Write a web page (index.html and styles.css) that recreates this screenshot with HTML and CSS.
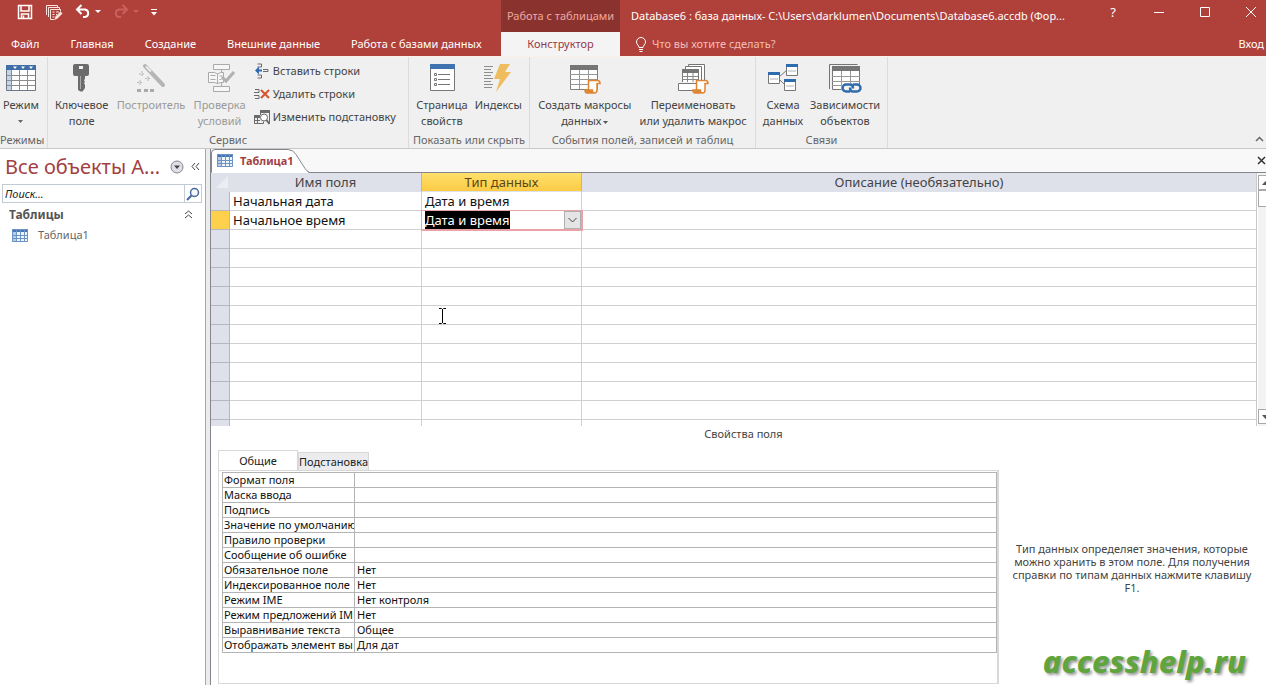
FILE: index.html
```html
<!DOCTYPE html>
<html lang="ru">
	<head>
		<meta charset="utf-8">
		<title>Database6 : база данных</title>
		<link rel="stylesheet" href="styles.css">
	</head>
	<body>
		<header id="pageHeader">
			<div class="headerLeft">
				<div class="quickAccess">
					<button aria-label="Сохранить"><svg width="16" height="16" viewBox="0 0 16 16"><path d="M1.500 1.500h13v13h-13zM4 2v5h8V2M4.500 14v-4h7v4M6.500 14v-2.500" fill="none" stroke="#fff" stroke-width="1.500"/></svg></button>
					<button aria-label="Форма"><svg width="18" height="17" viewBox="0 0 18 17"><path d="M3.500 13V3.500M1.500 11V1.500h11v2M3.500 3.500h11v2M5.500 15.500v-10h10v2M5.500 15.500h4M7.500 8h2M11 8h3M7.500 10.500h2M11 10.500h1M7.500 13h2" fill="none" stroke="#fbe3e0"/><path d="M9.500 16l1-3.500 5-5 2 2-5 5z" fill="#fbe3e0"/></svg></button>
					<button aria-label="Отменить"><svg width="26" height="16" viewBox="0 0 26 16"><path d="M2 5.500h8a3.800 3.800 0 0 1 0 7.500H8M6.500 1L2 5.500 6.500 10" fill="none" stroke="#fff" stroke-width="2"/><path d="M20 6h6l-3 3z" fill="#fff"/></svg></button>
					<button aria-label="Вернуть" disabled><svg width="26" height="16" viewBox="0 0 26 16"><path d="M14 5.500H6a3.800 3.800 0 0 0 0 7.500h2M9.500 1L14 5.500 9.500 10" fill="none" stroke="#c9605b" stroke-width="2"/><path d="M20 6h6l-3 3z" fill="#c9605b"/></svg></button>
					<button aria-label="Настройка панели"><svg width="6" height="8" viewBox="0 0 6 8"><path d="M0 1.500h6" stroke="#fff"/><path d="M0 4h6L3 7.500z" fill="#fff"/></svg></button>
				</div>
				<nav>
					<a href="#file">Файл</a>
					<a href="#home">Главная</a>
					<a href="#create">Создание</a>
					<a href="#external">Внешние данные</a>
					<a href="#tools">Работа с базами данных</a>
				</nav>
			</div>
			<div class="headerContext">
				<span>Работа с таблицами</span>
				<a href="#design">Конструктор</a>
			</div>
			<div class="headerRight">
				<div class="titleRow">
					<h1>Database6 : база данных- C:\Users\darklumen\Documents\Database6.accdb (Фор...</h1>
					<div class="windowButtons">
						<button class="help" aria-label="Справка">?</button>
						<button aria-label="Свернуть"><svg width="12" height="12"><path d="M1 6.500h10" stroke="#fff"/></svg></button>
						<button aria-label="Развернуть"><svg width="12" height="12"><path d="M1.500 1.500h9v9h-9z" stroke="#fff" fill="none"/></svg></button>
						<button aria-label="Закрыть"><svg width="12" height="12"><path d="M1 1l10 10M11 1L1 11" stroke="#fff"/></svg></button>
					</div>
				</div>
				<div class="tellRow">
					<a href="#tell"><svg width="12" height="15" viewBox="0 0 12 15"><path d="M4 10.500C4 8.500 1.500 7.500 1.500 5a4.500 4.500 0 0 1 9 0c0 2.500-2.500 3.500-2.500 5.500zM4 12.500h4M4.500 14.500h3" fill="none" stroke="#fff"/></svg>Что вы хотите сделать?</a>
					<a href="#login" class="login">Вход</a>
				</div>
			</div>
		</header>

		<section id="ribbon">
			<div class="group groupViews">
				<div class="tools">
					<button class="big">
						<svg width="32" height="32" viewBox="0 0 32 32"><path d="M1 2h30v26H1z" fill="#fff"/><path d="M1 7h5v21H1z" fill="#c5d5e8"/><path d="M1 12.500h30M1 17.500h30M1 22.500h30M6.500 7v21M14.500 7v21M22.500 7v21" stroke="#8c8c8c"/><path d="M1.500 2.500h29v25h-29z" fill="none" stroke="#6e7885"/><path d="M1 2h30v5H1z" fill="#3f6ea8"/><path d="M8 3.500h4l-2 2.500zM16 3.500h4l-2 2.500zM24 3.500h4l-2 2.500z" fill="#fff"/></svg>
						<span>Режим</span>
						<svg class="caret" width="5" height="3"><path d="M0 0h5L2.500 3z" fill="#666"/></svg>
					</button>
				</div>
				<h2>Режимы</h2>
			</div>
			<div class="group groupTools">
				<div class="tools">
					<button class="big">
						<svg width="32" height="32" viewBox="0 0 32 32"><path fill-rule="evenodd" d="M9 1h12q2 0 2 2v8q0 2-2 2h-2v3l-1 1 1 2-1 1 1 2v3l-2.500 3.500h-2L12 27V13H9q-2 0-2-2V3q0-2 2-2zM13 3v3h4V3z" fill="#6b6b6b"/><path d="M14.500 13v13" stroke="#aaa"/></svg>
						<span>Ключевое<br>поле</span>
					</button>
					<button class="big" disabled>
						<svg width="32" height="32" viewBox="0 0 32 32"><path d="M10 3l18 19" stroke="#b5b5b5" stroke-width="4" stroke-linecap="round"/><path d="M11 3.500l5 5" stroke="#efefef" stroke-width="2"/><path d="M7 8v6M4 11h6M13 13v5M10 15.500h6M5 17v5M2 19.500h6" stroke="#b5b5b5" stroke-dasharray="2 1"/><path d="M2 26h4v3H2zM9 26h4v3H9zM15 26h4v3h-4z" fill="#aaa"/></svg>
						<span>Построитель</span>
					</button>
					<button class="big" disabled>
						<svg width="32" height="32" viewBox="0 0 32 32"><path d="M9.500 1.500h16v5h-16zM9.500 23.500h16v5h-16zM17.500 7v3M17.500 20v3" fill="#f6f6f6" stroke="#aaa"/><path d="M4.500 9.500h6l3 1.500v9.500l-3-1h-6zM13.500 11l3-1.500h3v10h-3l-3 1zM6.500 12.500h5M6.500 16.500h5M15.500 13h3M15.500 16.500h2" fill="#f6f6f6" stroke="#aaa"/><path d="M18 14l4 4 8-9" fill="none" stroke="#b0b0b0" stroke-width="3"/></svg>
						<span>Проверка<br>условий</span>
					</button>
					<div class="smallTools">
						<button><svg width="16" height="16" viewBox="0 0 16 16"><path d="M3.500 1h4v3h-4M3.500 12h4v3h-4M9 6.500h5v2H9" fill="none" stroke="#6b6b6b"/><path d="M8 7.500H3" stroke="#2e6cad" stroke-width="2"/><path d="M5 3.500v8L1 7.500z" fill="#2e6cad"/></svg>Вставить строки</button>
						<button><svg width="16" height="16" viewBox="0 0 16 16"><path d="M1 3.500h4v3H0M1 12.500h4v-3H0" fill="none" stroke="#6b6b6b"/><path d="M7 4l8 8M15 4l-8 8" stroke="#d8522c" stroke-width="2"/></svg>Удалить строки</button>
						<button><svg width="16" height="16" viewBox="0 0 16 16"><path d="M6.500 6V1.500h9v12H14M.500 8.500h6M.500 6.500v8h9v-2M3.500 8v6M0 11.500h6" fill="none" stroke="#6b6b6b"/><path d="M6 1h10v3H6zM0 6h6v2H0z" fill="#6b6b6b"/><circle cx="10" cy="8.500" r="3.500" fill="#fff" stroke="#6b6b6b"/><path d="M12.500 11l3 4" stroke="#6b6b6b" stroke-width="2"/></svg>Изменить подстановку</button>
					</div>
				</div>
				<h2>Сервис</h2>
			</div>
			<div class="group groupShow">
				<div class="tools">
					<button class="big">
						<svg width="32" height="32" viewBox="0 0 32 32"><path d="M4.500 1.500h24v26h-24z" fill="#fff" stroke="#777"/><path d="M4 1h25v5H4z" fill="#3f74b0"/><path d="M12 11.500h12M12 16.500h12M12 21.500h12" stroke="#777"/><path d="M8.500 10.500h2v2h-2zM8.500 15.500h2v2h-2zM8.500 20.500h2v2h-2z" fill="none" stroke="#777"/></svg>
						<span>Страница<br>свойств</span>
					</button>
					<button class="big">
						<svg width="32" height="32" viewBox="0 0 32 32"><path d="M2 3.500h9M2 6.500h7M2 9.500h9M2 12.500h7M2 15.500h9M2 18.500h7M2 21.500h9M2 24.500h8" stroke="#8d8d8d"/><path d="M18 1h10l-5 8h6L14 29l4-13h-6z" fill="#efbd5e"/></svg>
						<span>Индексы</span>
					</button>
				</div>
				<h2>Показать или скрыть</h2>
			</div>
			<div class="group groupEvents">
				<div class="tools">
					<button class="big">
						<svg width="32" height="32" viewBox="0 0 32 32"><path d="M1.500 2.500h27v24h-27z" fill="#fff" stroke="#808080"/><path d="M1 11.500h27M1 16.500h27M1 21.500h27M10.500 6v20M19.500 6v20" stroke="#999"/><path d="M1 2h28v5H1z" fill="#757575"/><path d="M19.500 27V17.500h9q2.500 0 2.500 3h-3V27q0 3-2.500 3H18q-2 0-2-3h8" fill="#fff" stroke="#df8432" stroke-width="1.500"/><path d="M16 27h8l1 3h-7z" fill="#df8432"/></svg>
						<span>Создать макросы<br>данных<svg class="caret" width="5" height="3"><path d="M0 0h5L2.500 3z" fill="#555"/></svg></span>
					</button>
					<button class="big">
						<svg width="32" height="32" viewBox="0 0 32 32"><path d="M11.500 4V1.500h16v18M8.500 7V3.500h16v16M5.500 19V6.500h16v13" fill="#fff" stroke="#757575"/><path d="M5 6h17v4H5z" fill="#757575"/><path d="M5 13.500h16M5 16.500h16M10.500 10v9M16 10v9" stroke="#888"/><path d="M1.500 20.500h18v7h-18z" fill="#fff" stroke="#777"/><path d="M19.500 27V17.500h9q2.500 0 2.500 3h-3V27q0 3-2.500 3H18q-2 0-2-3h8" fill="#fff" stroke="#df8432" stroke-width="1.500"/><path d="M16 27h8l1 3h-7z" fill="#df8432"/></svg>
						<span>Переименовать<br>или удалить макрос</span>
					</button>
				</div>
				<h2>События полей, записей и таблиц</h2>
			</div>
			<div class="group groupLinks">
				<div class="tools">
					<button class="big">
						<svg width="32" height="32" viewBox="0 0 32 32"><path d="M12 14l8-7M12 16l5 5" stroke="#777"/><path d="M1.500 9.500h11v11h-11zM19.500 1.500h11v11h-11zM17.500 16.500h11v11h-11z" fill="#fff" stroke="#777"/><path d="M1 9h12v3H1zM19 1h12v3H19zM17 16h12v3H17z" fill="#2f6cae"/><path d="M3 16h8M21 8h8M19 23h8" stroke="#b0b0b0"/></svg>
						<span>Схема<br>данных</span>
					</button>
					<button class="big">
						<svg width="34" height="32" viewBox="0 0 34 32"><path d="M1.500 26V1.500h28" fill="none" stroke="#757575"/><path d="M4.500 3.500h27v23h-27z" fill="#fff" stroke="#757575"/><path d="M4 3h28v5H4z" fill="#757575"/><path d="M4 13.500h28M4 18.500h28M4 22.500h28M13.500 8v18M22.500 8v18" stroke="#999"/><rect x="13" y="20" width="20" height="10" rx="5" fill="#f3f3f3"/><path d="M22 28.500h-4a3.500 3.500 0 0 1 0-7h4q3 0 3 4M25 21.500h4a3.500 3.500 0 0 1 0 7h-4q-3 0-3-4" fill="none" stroke="#2f6cae" stroke-width="2.500"/></svg>
						<span>Зависимости<br>объектов</span>
					</button>
				</div>
				<h2>Связи</h2>
			</div>
			<button class="collapse" aria-label="Свернуть ленту"><svg width="9" height="6"><path d="M1 5l3.500-3.500L8 5" fill="none" stroke="#666" stroke-width="1.500"/></svg></button>
		</section>

		<div id="workspace">
			<aside>
				<div class="paneTitle">
					<h2>Все объекты A...</h2>
					<button aria-label="Выбор объектов"><svg width="14" height="14"><circle cx="7" cy="7" r="6" fill="#dedee6" stroke="#85858f"/><path d="M4 5.500h6L7 9z" fill="#444"/></svg></button>
					<button aria-label="Свернуть область"><svg width="9" height="9"><path d="M4 1L1 4.500 4 8M8 1L5 4.500 8 8" fill="none" stroke="#444"/></svg></button>
				</div>
				<div class="search">
					<input type="text" placeholder="Поиск..." aria-label="Поиск">
					<button aria-label="Найти"><svg width="14" height="14"><circle cx="8.500" cy="5.500" r="4" fill="#f4f8fc" stroke="#47689a" stroke-width="1.500"/><path d="M5.500 8.500L1 13" stroke="#47689a" stroke-width="2"/></svg></button>
				</div>
				<div class="paneGroup">
					<h3>Таблицы</h3>
					<button aria-label="Свернуть группу"><svg width="9" height="9"><path d="M1 4l3.500-3L8 4M1 8l3.500-3L8 8" fill="none" stroke="#444"/></svg></button>
				</div>
				<a href="#table1" class="paneItem"><svg width="16" height="13" viewBox="0 0 16 13"><path d="M0 0h16v13H0z" fill="#eef4fb"/><path d="M0 0h16v3H0z" fill="#4674b5"/><path d="M0 3h4v10H0z" fill="#b5cbe8"/><path d="M0 6.500h16M0 9.500h16M4.500 0v13M8.500 0v13M12.500 0v13M.500.500h15v12h-15z" fill="none" stroke="#6d93c4"/></svg>Таблица1</a>
			</aside>

			<main>
				<div class="docTabs">
					<a href="#table1" class="docTab">
						<svg class="tabShape" width="98" height="24" viewBox="0 0 98 24"><path d="M.500 24V4q0-3.500 3.500-3.500h73q5 0 8 5l9 14q2 3.500 4 4.500z" fill="#fff"/><path d="M.500 23.500V4q0-3.500 3.500-3.500h73q5 0 8 5l9 14q2 3 4 3.500" fill="none" stroke="#85858d"/></svg>
						<svg width="16" height="13" viewBox="0 0 16 13"><path d="M0 0h16v13H0z" fill="#eef4fb"/><path d="M0 0h16v3H0z" fill="#4674b5"/><path d="M0 3h4v10H0z" fill="#b5cbe8"/><path d="M0 6.500h16M0 9.500h16M4.500 0v13M8.500 0v13M12.500 0v13M.500.500h15v12h-15z" fill="none" stroke="#6d93c4"/></svg>
						<span>Таблица1</span>
					</a>
					<button aria-label="Закрыть таблицу"><svg width="9" height="9"><path d="M1 1l7 7M8 1L1 8" stroke="#333" stroke-width="1.500"/></svg></button>
				</div>

				<div class="gridArea">
					<div class="gridScroll">
						<table class="fieldGrid">
							<colgroup><col class="colMark"><col class="colName"><col class="colType"><col></colgroup>
							<thead>
								<tr><th class="corner"><svg width="14" height="14"><path d="M13 1v12H1z" fill="#eceef3"/></svg></th><th>Имя поля</th><th class="active">Тип данных</th><th>Описание (необязательно)</th></tr>
							</thead>
							<tbody>
								<tr><th></th><td>Начальная дата</td><td>Дата и время</td><td></td></tr>
								<tr><th class="current"></th><td>Начальное время</td><td class="editing"><div class="combo"><select aria-label="Тип данных"><option>Дата и время</option></select><button aria-label="Открыть список"><svg width="9" height="6"><path d="M.500 1l4 4 4-4" fill="none" stroke="#444"/></svg></button></div></td><td></td></tr>
								<tr><th></th><td></td><td></td><td></td></tr>
								<tr><th></th><td></td><td></td><td></td></tr>
								<tr><th></th><td></td><td></td><td></td></tr>
								<tr><th></th><td></td><td></td><td></td></tr>
								<tr><th></th><td></td><td></td><td></td></tr>
								<tr><th></th><td></td><td></td><td></td></tr>
								<tr><th></th><td></td><td></td><td></td></tr>
								<tr><th></th><td></td><td></td><td></td></tr>
								<tr><th></th><td></td><td></td><td></td></tr>
								<tr><th></th><td></td><td></td><td></td></tr>
								<tr><th></th><td></td><td></td><td></td></tr>
							</tbody>
						</table>
					</div>
					<div class="scrollBar">
						<button aria-label="Вверх"><svg width="7" height="4"><path d="M0 4h7L3.500 0z" fill="#555"/></svg></button>
						<div class="thumb"></div>
						<button class="down" aria-label="Вниз"><svg width="7" height="4"><path d="M0 0h7L3.500 4z" fill="#555"/></svg></button>
					</div>
					<svg class="cursor" width="9" height="16"><path d="M1 .500h2.500l1 1 1-1H8M4.500 1v14M1 15.500h2.500l1-1 1 1H8" fill="none" stroke="#000"/></svg>
				</div>

				<h2 class="propsTitle">Свойства поля</h2>

				<div class="propsArea">
					<div class="props">
						<div class="propTabs">
							<button class="selected">Общие</button>
							<button>Подстановка</button>
						</div>
						<div class="propPanel">
							<table>
								<tr><th>Формат поля</th><td></td></tr>
								<tr><th>Маска ввода</th><td></td></tr>
								<tr><th>Подпись</th><td></td></tr>
								<tr><th>Значение по умолчанию</th><td></td></tr>
								<tr><th>Правило проверки</th><td></td></tr>
								<tr><th>Сообщение об ошибке</th><td></td></tr>
								<tr><th>Обязательное поле</th><td>Нет</td></tr>
								<tr><th>Индексированное поле</th><td>Нет</td></tr>
								<tr><th>Режим IME</th><td>Нет контроля</td></tr>
								<tr><th>Режим предложений IM</th><td>Нет</td></tr>
								<tr><th>Выравнивание текста</th><td>Общее</td></tr>
								<tr><th>Отображать элемент вы</th><td>Для дат</td></tr>
							</table>
						</div>
					</div>
					<div class="hint">
						<p>Тип данных определяет значения, которые можно хранить в этом поле. Для получения справки по типам данных нажмите клавишу F1.</p>
					</div>
				</div>
			</main>
		</div>
		<div class="watermark">accesshelp.ru</div>
	</body>
</html>
```
FILE: styles.css
```css
html, body {
	height: 100%;
}

* {
	box-sizing: border-box;
}

body {
	margin: 0;
	font-family: "Noto Sans", "Open Sans", "Liberation Sans", sans-serif;
	font-size: 11px;
	line-height: 16px;
	color: #444;
	background-color: #fff;
	display: flex;
	flex-direction: column;
	overflow: hidden;
	position: relative;
}

h1, h2, h3, p {
	margin: 0;
	font-size: inherit;
	font-weight: normal;
}

a {
	color: inherit;
	text-decoration: none;
}

button, input, select {
	font: inherit;
	color: inherit;
	margin: 0;
	padding: 0;
	border: 0;
	background: none;
	border-radius: 0;
}

svg {
	flex: none;
}

/* title bar and ribbon tabs */
#pageHeader {
	display: flex;
	flex: none;
	background-color: #b0413a;
	color: #fff;
}

.headerLeft {
	flex: 0 0 501px;
}

.quickAccess {
	display: flex;
	align-items: center;
	height: 24px;
	gap: 12px;
	padding-left: 17px;
	margin-bottom: 8px;
}

.quickAccess button {
	display: flex;
}

nav {
	display: flex;
	gap: 31px;
	padding-left: 11px;
	line-height: 24px;
	white-space: nowrap;
}

.headerContext {
	flex: 0 0 119px;
	display: flex;
	flex-direction: column;
	text-align: center;
	background-color: #8a332e;
	color: #f0a8a2;
	line-height: 32px;
	white-space: nowrap;
}

.headerContext a {
	background-color: #f4f4f4;
	color: #963a4c;
	line-height: 24px;
}

.headerRight {
	flex: 1;
	min-width: 0;
}

.titleRow {
	display: flex;
	justify-content: space-between;
	height: 32px;
	padding-left: 11px;
}

.titleRow h1 {
	line-height: 32px;
	white-space: nowrap;
}

.windowButtons {
	display: flex;
	height: 24px;
}

.windowButtons button {
	width: 46px;
	display: flex;
	align-items: center;
	justify-content: flex-end;
	padding-right: 9px;
}

.windowButtons .help {
	font-size: 13px;
	padding-right: 12px;
}

.tellRow {
	display: flex;
	justify-content: space-between;
	line-height: 24px;
	padding: 0 2px 0 15px;
	color: #f3bdb6;
}

.tellRow a {
	display: flex;
	align-items: center;
	gap: 5px;
}

.tellRow .login {
	color: #fff;
}

/* ribbon */
#ribbon {
	display: flex;
	flex: none;
	background-color: #f0f0f0;
	border-top: 1px solid #fdeee6;
	border-bottom: 1px solid #c8c8c8;
	white-space: nowrap;
}

.group {
	display: flex;
	flex-direction: column;
	justify-content: space-between;
	height: 91px;
	padding-top: 6px;
	border-right: 1px solid #dcdcdc;
}

.group h2 {
	text-align: center;
	color: #666;
}

.tools {
	display: flex;
	justify-content: space-evenly;
}

.big {
	display: flex;
	flex-direction: column;
	align-items: center;
	gap: 2px;
}

.big > .caret {
	margin-top: 5px;
}

span .caret {
	margin-left: 2px;
	vertical-align: middle;
}

button:disabled {
	color: #9a9a9a;
}

.groupViews {
	width: 48px;
	padding-right: 5px;
}

.groupTools {
	width: 361px;
}

.groupTools .tools {
	justify-content: space-between;
	padding: 0 12px 0 7px;
}

.groupShow {
	width: 121px;
}

.groupEvents {
	width: 226px;
}

.groupLinks {
	width: 132px;
}

.smallTools {
	display: flex;
	flex-direction: column;
	gap: 7px;
}

.smallTools button {
	display: flex;
	align-items: center;
	gap: 3px;
	text-align: left;
}

.collapse {
	margin-left: auto;
	align-self: flex-end;
	padding: 0 2px 2px;
}

/* navigation pane */
#workspace {
	display: flex;
	flex: 1;
	min-height: 0;
}

aside {
	flex: 0 0 206px;
	border-right: 1px solid #a8a8a8;
}

aside button {
	display: flex;
}

.paneTitle {
	display: flex;
	align-items: center;
	gap: 7px;
	height: 35px;
	padding: 0 5px;
}

.paneTitle h2 {
	flex: 1;
	font-size: 20px;
	color: #a23f42;
	white-space: nowrap;
}

.search {
	display: flex;
	height: 19px;
	margin: 0 3px 0 2px;
	border: 1px solid #c2cad4;
}

.search input {
	flex: 1;
	min-width: 0;
	font-style: italic;
	padding-left: 2px;
}

.search input::placeholder {
	color: #222;
	opacity: 1;
}

.search button {
	align-items: center;
	justify-content: center;
	width: 17px;
	border-left: 1px solid #c2cad4;
}

.paneGroup {
	display: flex;
	align-items: center;
	justify-content: space-between;
	height: 23px;
	padding: 0 12px 0 9px;
}

.paneGroup h3 {
	font-size: 12px;
	font-weight: bold;
	color: #555;
}

.paneItem {
	display: flex;
	align-items: center;
	gap: 10px;
	padding: 1px 0 0 12px;
	color: #666;
}

/* document */
main {
	flex: 1;
	min-width: 0;
	display: flex;
	flex-direction: column;
	margin-left: 4px;
	border-left: 1px solid #85858d;
	box-shadow: -4px 0 0 #ececec;
}

.docTabs {
	display: flex;
	flex: none;
	justify-content: space-between;
	align-items: center;
	height: 24px;
	background-color: #f8f8f9;
	border-bottom: 1px solid #85858d;
}

.docTab {
	display: flex;
	align-items: center;
	gap: 7px;
	position: relative;
	height: 24px;
	padding-left: 6px;
	font-weight: bold;
	color: #a23f42;
}

.docTab > * {
	position: relative;
}

.docTab .tabShape {
	position: absolute;
	left: 0;
	top: 0;
}

.gridArea {
	display: flex;
	flex: none;
	height: 253px;
	position: relative;
}

.gridScroll {
	flex: 1;
	overflow: hidden;
	border-right: 1px solid #c8c8c8;
	margin-right: 1px;
}

table {
	border-collapse: separate;
	border-spacing: 0;
	table-layout: fixed;
	width: 100%;
}

.fieldGrid {
	font-size: 13px;
	line-height: 18px;
	color: #111;
}

.colMark {
	width: 19px;
}

.colName {
	width: 192px;
}

.colType {
	width: 160px;
}

.fieldGrid td, .fieldGrid th {
	height: 19px;
	padding: 0 3px;
	border-right: 1px solid #d0d0d4;
	border-bottom: 1px solid #d0d0d4;
	font-weight: normal;
}

.fieldGrid td:last-child, .fieldGrid th:last-child {
	border-right: 0;
}

.fieldGrid th {
	background-color: #dfe1ea;
	border-color: #b4b6c0;
	color: #444;
}

.fieldGrid thead th {
	border-bottom-color: #dfe1ea;
}

.fieldGrid .corner {
	padding: 0;
	border-right-color: #dfe1ea;
}

.corner svg {
	display: block;
	margin-left: 4px;
}

.fieldGrid .active {
	background: linear-gradient(#ffe06b, #fccb45);
	color: #5b4716;
}

.fieldGrid .current {
	background-color: #ffd04b;
}

.fieldGrid .editing {
	position: relative;
	padding: 0 0 0 3px;
	outline: 1px solid #e9a3a7;
	border-color: #e9a3a7;
}

.combo {
	display: flex;
	justify-content: space-between;
	height: 18px;
}

.combo select {
	appearance: none;
	background-color: #000;
	color: #fff;
}

.combo button {
	display: flex;
	align-items: center;
	justify-content: center;
	width: 17px;
	background-color: #e4e4e4;
	border: 1px solid #b0b0b0;
}

.scrollBar {
	flex: 0 0 8px;
	display: flex;
	flex-direction: column;
	overflow: hidden;
	background-color: #f3f3f4;
	padding: 2px 0;
}

.scrollBar button, .thumb {
	display: flex;
	align-items: center;
	flex: none;
	width: 16px;
	height: 15px;
	padding-left: 3px;
	background-color: #fff;
	border: 1px solid #a8a8a8;
}

.thumb {
	height: 17px;
}

.scrollBar .down {
	margin-top: auto;
}

/* mouse pointer lies over the grid */
.cursor {
	position: absolute;
	left: 227px;
	top: 135px;
}

/* field properties */
.propsTitle {
	text-align: center;
	padding-left: 10px;
}

.propsArea {
	display: flex;
	flex: 1;
	min-height: 0;
	padding: 8px 14px 0 7px;
}

.props {
	flex: 1;
	display: flex;
	flex-direction: column;
}

.propTabs {
	display: flex;
	align-items: flex-end;
	color: #222;
}

.propTabs button {
	height: 18px;
	padding: 0;
	background-color: #ececee;
	border: 1px solid #d8d8d8;
	border-bottom: 0;
}

.propTabs .selected {
	width: 80px;
	height: 20px;
	background-color: #fff;
}

.propPanel {
	flex: 1;
	border: 1px solid #d8d8d8;
	border-right-width: 2px;
	padding: 1px 0 0 3px;
	margin-bottom: 1px;
}

.propPanel table {
	border-top: 1px solid #b4b4b4;
	border-left: 1px solid #b4b4b4;
	color: #111;
	line-height: 14px;
}

.propPanel th, .propPanel td {
	height: 15px;
	padding: 0 0 0 2px;
	border-right: 1px solid #b4b4b4;
	border-bottom: 1px solid #b4b4b4;
	font-weight: normal;
	text-align: left;
	white-space: nowrap;
	overflow: hidden;
}

.propPanel th {
	width: 132px;
	padding-left: 1px;
}

.hint {
	flex: 0 0 253px;
	padding: 92px 0 0 13px;
	text-align: center;
	line-height: 13px;
}

/* site mark over the lower right corner */
.watermark {
	position: absolute;
	right: 20px;
	bottom: 4px;
	font-size: 31px;
	font-weight: 800;
	font-style: italic;
	line-height: 40px;
	color: #5fa53d;
	text-shadow: 2px 2px 3px #999;
}
```
